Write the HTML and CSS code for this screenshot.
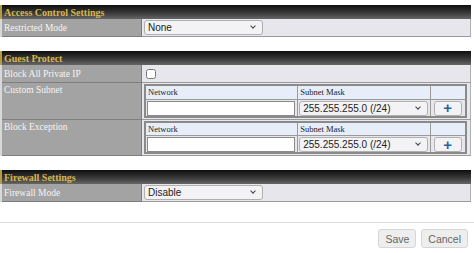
FILE: index.html
```html
<!DOCTYPE html>
<html lang="en">
<head>
    <meta charset="UTF-8">
    <title>Access Control</title>
    <link rel="stylesheet" href="styles.css">
</head>
<body>
    <table class="form-table">
        <tr><th colspan="2" class="section">Access Control Settings</th></tr>
        <tr>
            <td class="label">Restricted Mode</td>
            <td class="value">
                <span class="sel-wrap sel-mode"><select class="sel"><option>None</option></select></span>
            </td>
        </tr>
    </table>

    <table class="form-table">
        <tr><th colspan="2" class="section">Guest Protect</th></tr>
        <tr>
            <td class="label">Block All Private IP</td>
            <td class="value"><input type="checkbox" class="check"></td>
        </tr>
        <tr>
            <td class="label top">Custom Subnet</td>
            <td class="value">
                <table class="sub-table">
                    <tr>
                        <th class="col-net">Network</th>
                        <th class="col-mask">Subnet Mask</th>
                        <th class="col-btn"></th>
                    </tr>
                    <tr>
                        <td><input type="text" class="text-in"></td>
                        <td><span class="sel-wrap sel-mask"><select class="sel"><option>255.255.255.0 (/24)</option></select></span></td>
                        <td class="btn-cell"><button class="add-btn">+</button></td>
                    </tr>
                </table>
            </td>
        </tr>
        <tr>
            <td class="label top">Block Exception</td>
            <td class="value">
                <table class="sub-table">
                    <tr>
                        <th class="col-net">Network</th>
                        <th class="col-mask">Subnet Mask</th>
                        <th class="col-btn"></th>
                    </tr>
                    <tr>
                        <td><input type="text" class="text-in"></td>
                        <td><span class="sel-wrap sel-mask"><select class="sel"><option>255.255.255.0 (/24)</option></select></span></td>
                        <td class="btn-cell"><button class="add-btn">+</button></td>
                    </tr>
                </table>
            </td>
        </tr>
    </table>

    <table class="form-table">
        <tr><th colspan="2" class="section">Firewall Settings</th></tr>
        <tr>
            <td class="label">Firewall Mode</td>
            <td class="value">
                <span class="sel-wrap sel-mode"><select class="sel"><option>Disable</option></select></span>
            </td>
        </tr>
    </table>

    <div class="actions">
        <button class="btn">Save</button>
        <button class="btn">Cancel</button>
    </div>
</body>
</html>
```

FILE: styles.css
```css
body {
    margin: 0;
    padding: 5px 0 0 0;
    background: #fff;
    font-family: 'Liberation Serif', serif;
    font-size: 9.5px;
    color: #222;
}
.form-table {
    width: 471px;
    border-collapse: collapse;
    margin-bottom: 14px;
}
.section {
    height: 14px;
    padding: 0 0 0 2px;
    text-align: left;
    font-weight: bold;
    font-size: 10px;
    color: #d9b54a;
    background: linear-gradient(#0e0e0e, #383838 55%, #666);
    border-left: 2px solid #b89a40;
}
.label {
    width: 137px;
    height: 17px;
    padding: 0 0 0 2px;
    background: #a3a3a3;
    color: #f4f4f4;
    border-bottom: 1px solid #7e7e7e;
    border-right: 1px solid #7e7e7e;
    border-left: 2px solid #d8d8d8;
    vertical-align: middle;
}
.label.top {
    vertical-align: top;
    padding-top: 2px;
}
.value {
    padding: 1px 3px 1px 2px;
    background: #e7e6ed;
    border-bottom: 1px solid #9a9a9a;
    border-right: 1px solid #b0b0b0;
}
.sel-wrap {
    position: relative;
    display: inline-block;
    vertical-align: middle;
}
.sel-wrap::after {
    content: "";
    position: absolute;
    right: 8px;
    top: 4px;
    width: 3px;
    height: 3px;
    border-right: 1.5px solid #444;
    border-bottom: 1.5px solid #444;
    transform: rotate(45deg);
    pointer-events: none;
}
.sel {
    appearance: none;
    -webkit-appearance: none;
    box-sizing: border-box;
    width: 100%;
    height: 15px;
    font-family: 'Liberation Sans', sans-serif;
    font-size: 10px;
    color: #222;
    background: #f3f3f6;
    border: 1px solid #b0b0b0;
    border-radius: 3px;
    padding: 0 3px;
    display: block;
}
.sel-mode {
    width: 119px;
}
.sel-mask {
    width: 129px;
}
.check {
    margin: 3px 0 2px 2px;
    width: 10px;
    height: 10px;
    vertical-align: middle;
}
.sub-table {
    width: 100%;
    border-collapse: collapse;
    border: 2px solid #8a8a8a;
}
.sub-table th {
    height: 12.5px;
    padding: 0 2px;
    text-align: left;
    font-weight: normal;
    font-size: 8.5px;
    background: #e7eefa;
    border: 1px solid #9a9a9a;
}
.sub-table td {
    padding: 1px 2px 0 1px;
    background: #e7e6ed;
    border: 1px solid #9a9a9a;
}
.col-net {
    width: 155px;
}
.col-btn {
    width: 30px;
}
.text-in {
    box-sizing: border-box;
    display: block;
    width: 100%;
    height: 15px;
    margin: 0;
    border: 1px solid #8a8a8a;
    background: #fff;
}
.btn-cell {
    text-align: center;
}
.add-btn {
    display: block;
    margin: 0 auto;
    width: 28px;
    height: 15px;
    padding: 0;
    line-height: 12px;
    font-size: 15px;
    font-weight: bold;
    font-family: 'Liberation Sans', sans-serif;
    color: #2f5fa0;
    background: #f3f3f6;
    border: 1px solid #b0b0b0;
    border-radius: 3px;
}
.actions {
    margin-top: 20px;
    border-top: 1px solid #dcdcdc;
    padding: 6px 6px 0 0;
    display: flex;
    justify-content: flex-end;
    gap: 5px;
}
.btn {
    height: 19px;
    padding: 0 6px;
    font-family: 'Liberation Sans', sans-serif;
    font-size: 10.5px;
    color: #666;
    background: #eeeeee;
    border: 1px solid #d6d6d6;
    border-radius: 3px;
}
```
